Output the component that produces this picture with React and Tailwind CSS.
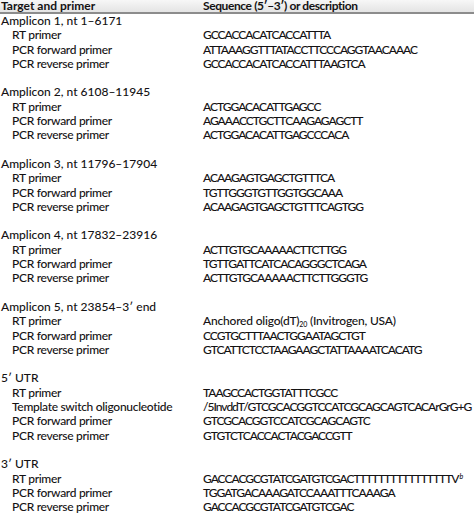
const groups = [
  {
    title: 'Amplicon 1, nt 1–6171',
    rows: [
      ['RT primer', 'GCCACCACATCACCATTTA'],
      ['PCR forward primer', 'ATTAAAGGTTTATACCTTCCCAGGTAACAAAC'],
      ['PCR reverse primer', 'GCCACCACATCACCATTTAAGTCA']
    ]
  },
  {
    title: 'Amplicon 2, nt 6108–11945',
    rows: [
      ['RT primer', 'ACTGGACACATTGAGCC'],
      ['PCR forward primer', 'AGAAACCTGCTTCAAGAGAGCTT'],
      ['PCR reverse primer', 'ACTGGACACATTGAGCCCACA']
    ]
  },
  {
    title: 'Amplicon 3, nt 11796–17904',
    rows: [
      ['RT primer', 'ACAAGAGTGAGCTGTTTCA'],
      ['PCR forward primer', 'TGTTGGGTGTTGGTGGCAAA'],
      ['PCR reverse primer', 'ACAAGAGTGAGCTGTTTCAGTGG']
    ]
  },
  {
    title: 'Amplicon 4, nt 17832–23916',
    rows: [
      ['RT primer', 'ACTTGTGCAAAAACTTCTTGG'],
      ['PCR forward primer', 'TGTTGATTCATCACAGGGCTCAGA'],
      ['PCR reverse primer', 'ACTTGTGCAAAAACTTCTTGGGTG']
    ]
  },
  {
    title: 'Amplicon 5, nt 23854–3′ end',
    rows: [
      [
        'RT primer',
        <span className="tracking-[-0.2px]">
          Anchored oligo(dT)
          <sub className="text-[7px] align-baseline relative top-[2px]">20</sub> (Invitrogen, USA)
        </span>
      ],
      ['PCR forward primer', 'CCGTGCTTTAACTGGAATAGCTGT'],
      ['PCR reverse primer', 'GTCATTCTCCTAAGAAGCTATTAAAATCACATG']
    ]
  },
  {
    title: '5′ UTR',
    rows: [
      ['RT primer', 'TAAGCCACTGGTATTTCGCC'],
      ['Template switch oligonucleotide', '/5InvddT/GTCGCACGGTCCATCGCAGCAGTCACArGrG+G'],
      ['PCR forward primer', 'GTCGCACGGTCCATCGCAGCAGTC'],
      ['PCR reverse primer', 'GTGTCTCACCACTACGACCGTT']
    ]
  },
  {
    title: '3′ UTR',
    rows: [
      [
        'RT primer',
        <span className="tracking-[-1px]">
          GACCACGCGTATCGATGTCGACTTTTTTTTTTTTTTTTV
          <sup className="text-[7px] italic align-baseline relative -top-[4px] ml-[1px] tracking-normal">b</sup>
        </span>
      ],
      ['PCR forward primer', 'TGGATGACAAAGATCCAAATTTCAAAGA'],
      ['PCR reverse primer', 'GACCACGCGTATCGATGTCGAC']
    ]
  }
]

const Row = ({ left, right, indent }) => (
  <div className="grid grid-cols-[203px_1fr] h-[14.3px] leading-[14.3px] whitespace-nowrap">
    <div className={indent ? 'pl-[12px] tracking-[-0.3px]' : 'pl-[1px]'}>{left}</div>
    <div className={typeof right === 'string' ? 'tracking-[-1px]' : ''}>{right}</div>
  </div>
)

export default function App() {
  return (
    <div
      className="w-[474px] h-[516px] overflow-hidden bg-white text-[#141213] text-[12px] font-medium"
      style={{ fontFamily: 'Lato, "Open Sans", sans-serif' }}
    >
      {/* Header */}
      <div className="grid grid-cols-[203px_1fr] h-[14px] leading-[12px] font-bold bg-gradient-to-b from-[#f7f7f7] to-[#e4e4e4] border-b-2 border-[#8c8c8c] whitespace-nowrap">
        <div className="pl-[1px]">Target and primer</div>
        <div className="tracking-[-0.4px]">Sequence (5′–3′) or description</div>
      </div>

      {groups.map((g, i) => (
        <div key={g.title}>
          {i > 0 && <div className="h-[14.3px]" />}
          <Row left={g.title} right={null} />
          {g.rows.map(([l, r]) => (
            <Row key={l} left={l} right={r} indent />
          ))}
        </div>
      ))}
    </div>
  )
}
